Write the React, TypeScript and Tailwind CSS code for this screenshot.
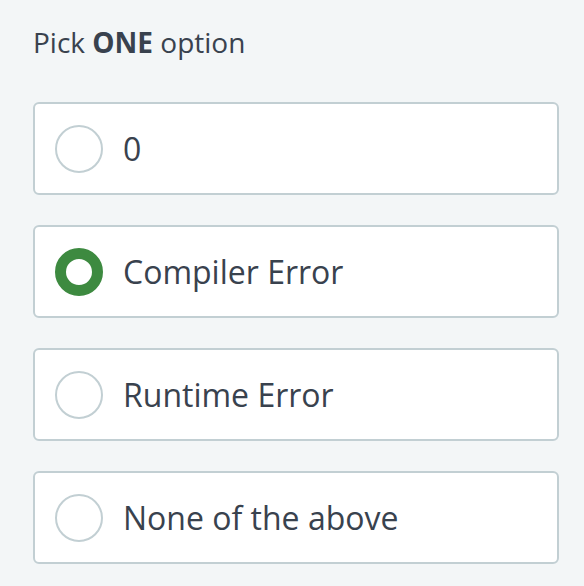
import React, { useState } from 'react';

const options = ['0', 'Compiler Error', 'Runtime Error', 'None of the above'];

const App: React.FC = () => {
  const [picked, setPicked] = useState(1);

  return (
    <div
      className="min-h-[586px] w-[584px] bg-[#f3f6f7] pl-[33px] pr-[25px] pt-[22px] text-[#39424e]"
      style={{ fontFamily: '"Open Sans", "Liberation Sans", sans-serif' }}
    >
      <p className="text-[28px] leading-[40px]">
        Pick <span className="font-bold">ONE</span> option
      </p>

      <div className="mt-[40px] flex flex-col gap-[30px]">
        {options.map((opt, i) => (
          <label
            key={opt}
            onClick={() => setPicked(i)}
            className="flex h-[93px] cursor-pointer items-center rounded-[6px] border-2 border-[#c2cfd3] bg-white pl-[20px]"
          >
            {picked === i ? (
              <span className="h-[48px] w-[48px] shrink-0 rounded-full border-[11px] border-[#3d8a40] bg-white" />
            ) : (
              <span className="h-[48px] w-[48px] shrink-0 rounded-full border-2 border-[#c2cfd3] bg-white" />
            )}
            <span className="ml-[20px] text-[32px] leading-none">{opt}</span>
          </label>
        ))}
      </div>
    </div>
  );
};

export default App;
